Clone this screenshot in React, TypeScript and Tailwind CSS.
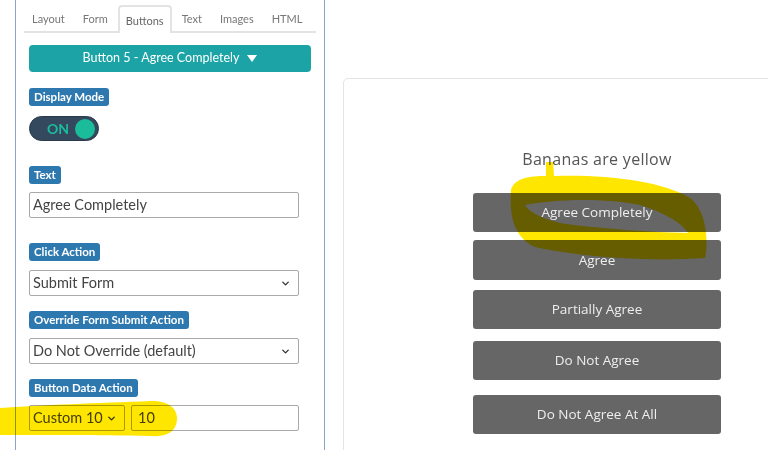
import React from 'react'
import { ChevronDown } from 'lucide-react'

const tabs = ['Layout', 'Form', 'Buttons', 'Text', 'Images', 'HTML']

const answers = [
  { label: 'Agree Completely', mt: 'mt-0', h: 'h-[39px]' },
  { label: 'Agree', mt: 'mt-[8px]', h: 'h-[40px]' },
  { label: 'Partially Agree', mt: 'mt-[10px]', h: 'h-[39px]' },
  { label: 'Do Not Agree', mt: 'mt-[12px]', h: 'h-[39px]' },
  { label: 'Do Not Agree At All', mt: 'mt-[15px]', h: 'h-[39px]' },
]

const Label = ({ children, className = '' }: { children: React.ReactNode; className?: string }) => (
  <div className={`self-start h-[18px] px-[5px] rounded-[3px] bg-[#2e78b0] text-white text-[11.5px] font-bold leading-[18px] ${className}`}>
    {children}
  </div>
)

const Select = ({ value, className = '' }: { value: string; className?: string }) => (
  <div className={`h-[26px] flex items-center justify-between border border-[#a9a9a9] rounded-[2px] bg-white pl-[3px] pr-[7px] text-[14.5px] text-[#444] ${className}`}>
    <span>{value}</span>
    <ChevronDown size={11} strokeWidth={3} className="text-[#333]" />
  </div>
)

const App = () => {
  return (
    <div className="relative w-[768px] h-[450px] overflow-hidden bg-white flex font-['Lato',sans-serif]">
      <div className="ml-[3px] w-px h-full bg-[#e2e2e2]"></div>
      {/* editor panel */}
      <div className="ml-[12px] w-[311px] h-full border-x border-[#8aa6c6] flex flex-col px-[13px]">
        <div className="mt-[5px] -mx-[5px] flex border-b-2 border-[#e3e3e3] h-[28px]">
          {tabs.map((t) =>
            t === 'Buttons' ? (
              <div key={t} className="mr-[2px] -mb-[2px] px-[6px] pt-[6px] rounded-t-[4px] border-2 border-b-0 border-[#e3e3e3] bg-white text-[11px] text-[#666]">
                {t}
              </div>
            ) : (
              <div key={t} className="mr-[2px] px-[8px] pt-[6px] text-[11px] text-[#777]">
                {t}
              </div>
            ),
          )}
        </div>
        <div className="mt-[12px] h-[27px] w-[282px] rounded-[4px] bg-[#1ba3a6] text-white text-[12.5px] flex items-center justify-center gap-[8px]">
          <span>Button 5 - Agree Completely</span>
          <svg width="10" height="7" viewBox="0 0 10 7">
            <path d="M0 0 H10 L5 7 Z" fill="white" />
          </svg>
        </div>
        <Label className="mt-[16px]">Display Mode</Label>
        <div className="mt-[10px] w-[70px] h-[25px] rounded-full bg-[#34495e] border border-[#2b3a4a] flex items-center pl-[17px] pr-[3px] justify-between">
          <span className="text-[#1abc9c] text-[14px] font-bold">ON</span>
          <span className="w-[20px] h-[20px] rounded-full bg-[#1abc9c]"></span>
        </div>
        <Label className="mt-[25px]">Text</Label>
        <div className="mt-[8px] w-[270px] h-[26px] border border-[#a9a9a9] rounded-[2px] pl-[3px] text-[14.5px] text-[#444] flex items-center">
          Agree Completely
        </div>
        <Label className="mt-[25px]">Click Action</Label>
        <Select value="Submit Form" className="mt-[9px] w-[270px]" />
        <Label className="mt-[15px]">Override Form Submit Action</Label>
        <Select value="Do Not Override (default)" className="mt-[9px] w-[270px]" />
        <Label className="mt-[15px]">Button Data Action</Label>
        <div className="mt-[8px] flex gap-[6px]">
          <Select value="Custom 10" className="w-[96px]" />
          <div className="w-[168px] h-[26px] border border-[#a9a9a9] rounded-[2px] pl-[6px] text-[14.5px] text-[#444] flex items-center">
            10
          </div>
        </div>
      </div>
      {/* preview */}
      <div className="ml-[18px] mt-[78px] w-[508px] h-[420px] shrink-0 rounded-[5px] border border-[#e4e4e4] flex flex-col items-center font-['Open_Sans',sans-serif]">
        <div className="mt-[68px] text-[16px] text-[#555] tracking-[0.3px]">Bananas are yellow</div>
        <div className="mt-[22px] w-[248px] flex flex-col">
          {answers.map((a) => (
            <div
              key={a.label}
              className={`${a.mt} ${a.h} rounded-[3px] bg-[#666666] text-[#eeeeee] text-[13.5px] flex items-center justify-center`}
            >
              {a.label}
            </div>
          ))}
        </div>
      </div>
      {/* highlighter marks */}
      <svg className="absolute inset-0 pointer-events-none mix-blend-multiply" width="768" height="450" viewBox="0 0 768 450">
        <path
          fillRule="evenodd"
          fill="#ffe600"
          d="M546 162 L553 162 L554 176 C600 174 662 180 690 198 C706 210 709 240 705 258 C650 262 580 257 535 247 C514 238 509 215 511 190 C514 178 530 176 546 176 Z M525 205 C550 200 600 197 640 205 C665 213 682 223 688 233 C650 232 590 228 560 223 C540 218 528 211 525 205 Z"
        />
        <path
          fill="#ffe600"
          d="M0 408 C40 405 100 403 150 401 C170 400 178 410 177 420 C176 433 165 437 150 436 C100 435 40 435 0 435 Z"
        />
      </svg>
    </div>
  )
}

export default App
